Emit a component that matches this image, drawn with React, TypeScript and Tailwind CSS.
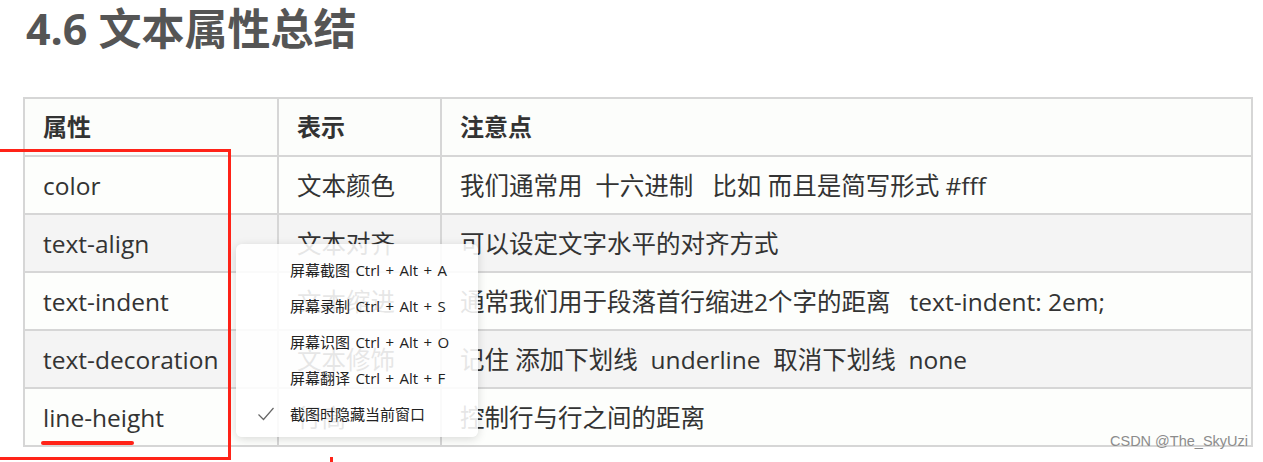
import React from "react";

const rows = [
  { prop: "color", desc: "文本颜色", note: "我们通常用  十六进制   比如 而且是简写形式 #fff" },
  { prop: "text-align", desc: "文本对齐", note: "可以设定文字水平的对齐方式" },
  { prop: "text-indent", desc: "文本缩进", note: "通常我们用于段落首行缩进2个字的距离   text-indent: 2em;" },
  { prop: "text-decoration", desc: "文本修饰", note: "记住 添加下划线  underline  取消下划线  none" },
  { prop: "line-height", desc: "行高", note: "控制行与行之间的距离" },
];

const menuItems = [
  { label: "屏幕截图 Ctrl + Alt + A", checked: false },
  { label: "屏幕录制 Ctrl + Alt + S", checked: false },
  { label: "屏幕识图 Ctrl + Alt + O", checked: false },
  { label: "屏幕翻译 Ctrl + Alt + F", checked: false },
  { label: "截图时隐藏当前窗口", checked: true },
];

const font = { fontFamily: '"Open Sans", "Noto Sans CJK SC", sans-serif' };

export default function App() {
  return (
    <div className="relative h-[462px] w-[1263px] overflow-hidden bg-white text-[#333]" style={font}>
      <h1 className="pl-[26px] text-[43px] font-bold leading-[58px] text-[#555]">4.6 文本属性总结</h1>

      <div className="ml-[23px] mt-[39px] w-[1230px] border-t-2 border-l-2 border-[#d6d6d6]">
        <div className="grid h-[58px] grid-cols-[254px_163px_1fr] bg-[#fcfdfb] text-[24px] font-bold">
          <div className="flex items-center border-r-2 border-b-2 border-[#d6d6d6] pl-[18px]">属性</div>
          <div className="flex items-center border-r-2 border-b-2 border-[#d6d6d6] pl-[18px]">表示</div>
          <div className="flex items-center border-r-2 border-b-2 border-[#d6d6d6] pl-[18px]">注意点</div>
        </div>
        {rows.map((r, i) => (
          <div
            key={r.prop}
            className={`grid h-[58px] grid-cols-[254px_163px_1fr] text-[24.5px] ${i % 2 === 1 ? "bg-[#f4f4f4]" : "bg-[#fdfefc]"}`}
          >
            <div className="flex items-center border-r-2 border-b-2 border-[#d6d6d6] pl-[18px] pt-[2px]">{r.prop}</div>
            <div className="flex items-center border-r-2 border-b-2 border-[#d6d6d6] pl-[18px] pt-[2px]">{r.desc}</div>
            <div className="flex items-center whitespace-pre border-r-2 border-b-2 border-[#d6d6d6] pl-[18px] pt-[2px]">{r.note}</div>
          </div>
        ))}
      </div>

      {/* red annotation box */}
      <div className="absolute left-[-10px] top-[149px] h-[311px] w-[241px] border-[3px] border-[#ff2318]" />
      <div className="absolute left-[41px] top-[441px] h-[4px] w-[93px] rounded-full bg-[#ff2318]" />
      <div className="absolute left-[330px] top-[457px] h-[6px] w-[3px] bg-[#ff2318]" />

      {/* watermark */}
      <div className="absolute left-[1110px] top-[431px] text-[14.5px] text-[#8c8c8c]" style={{ fontFamily: '"Liberation Sans", sans-serif' }}>
        CSDN @The_SkyUzi
      </div>

      {/* context menu */}
      <div className="absolute left-[236px] top-[244px] w-[242px] rounded-[6px] bg-white/[0.88] pt-[8px] pb-[5px] shadow-[0_2px_10px_rgba(0,0,0,0.15)]">
        {menuItems.map((m) => (
          <div key={m.label} className="relative flex h-[36px] items-center pl-[54px] text-[15px] text-[#222] [word-spacing:1.5px]">
            {m.checked && (
              <svg className="absolute left-[21px] top-[10px]" width="18" height="16" viewBox="0 0 18 16" fill="none">
                <path d="M1.5 8.5 L6.5 13.5 L16.5 2" stroke="#666" strokeWidth="1.2" />
              </svg>
            )}
            {m.label}
          </div>
        ))}
      </div>
    </div>
  );
}
